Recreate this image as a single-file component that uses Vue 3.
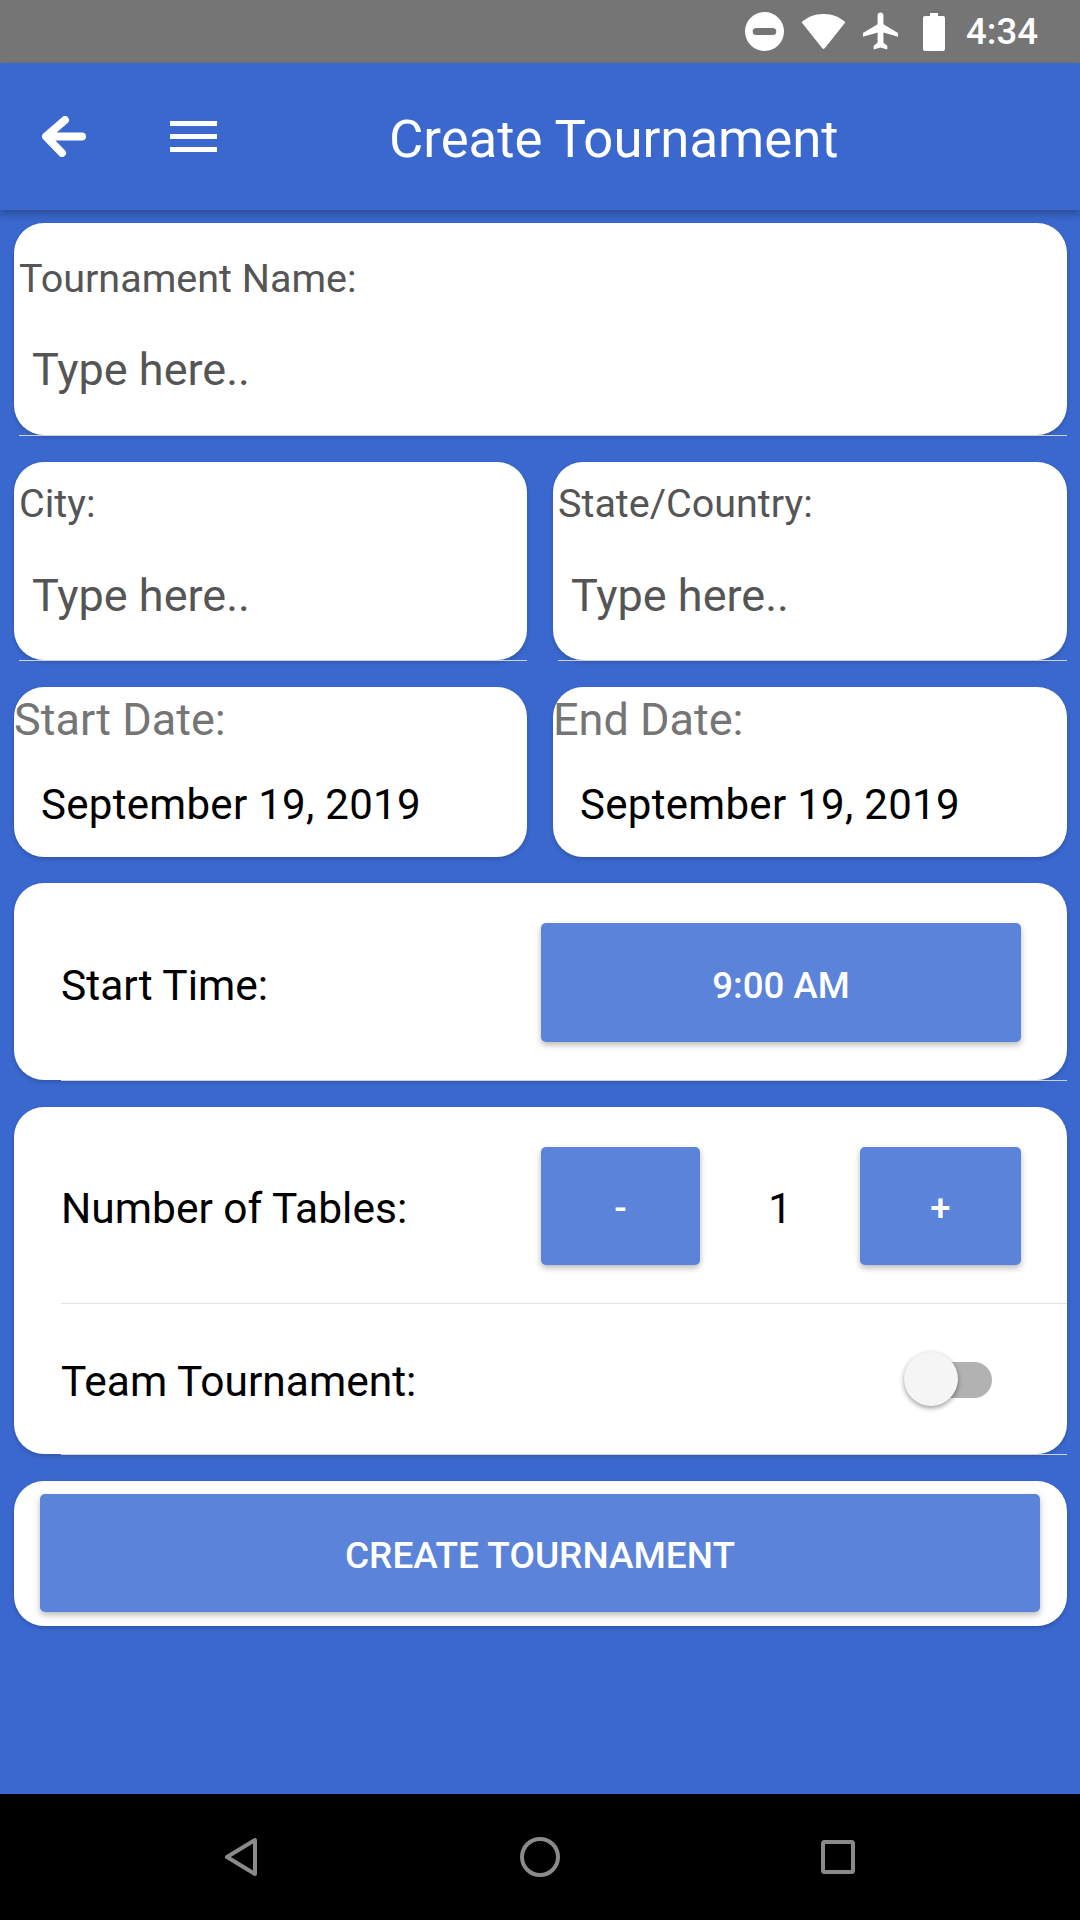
<script setup>
const navColor = '#8a8a8a'
</script>

<template>
  <div class="screen">
    <div class="status-bar">
      <svg class="st-icon dnd" viewBox="0 0 38 38"><path fill="#fff" fill-rule="evenodd" d="M19 0a19 19 0 1 1 0 38a19 19 0 1 1 0-38zM11 15.500a3.500 3.500 0 0 0 0 7h16a3.500 3.500 0 0 0 0-7z"/></svg>
      <svg class="st-icon wifi" viewBox="0 0 46 38"><path fill="#fff" d="M23 1C13.500 1 6 4.500 0.500 9.500L21.500 36a2 2 0 0 0 3 0L45.500 9.500C40 4.500 32.500 1 23 1z"/></svg>
      <svg class="st-icon plane" viewBox="0 0 38 40"><path fill="#fff" d="M37 25v-4L22 12V3c0-2-1.300-3-3-3s-3 1-3 3v9L1 21v4l15-4.500V31l-4 3v4l7-2l7 2v-4l-4-3V20.500z"/></svg>
      <svg class="st-icon battery" viewBox="0 0 22 38"><path fill="#fff" d="M7 0h8v3h5a2 2 0 0 1 2 2v31a2 2 0 0 1-2 2H2a2 2 0 0 1-2-2V5a2 2 0 0 1 2-2h5z"/></svg>
      <span class="clock">4:34</span>
    </div>

    <header class="app-header">
      <svg class="back-icon" viewBox="0 0 44 41"><path d="M23 4L4 20.500l16 16.500M5 20.500h35" fill="none" stroke="#fff" stroke-width="8" stroke-linecap="round" stroke-linejoin="round"/></svg>
      <div class="menu-icon"><i></i><i></i><i></i></div>
      <h1 class="title">Create Tournament</h1>
    </header>

    <main class="form">
      <section class="card name-card line">
        <label class="field-label">Tournament Name:</label>
        <div class="placeholder">Type here..</div>
      </section>

      <div class="two-col">
        <section class="card place-card line">
          <label class="field-label">City:</label>
          <div class="placeholder">Type here..</div>
        </section>
        <section class="card place-card line">
          <label class="field-label">State/Country:</label>
          <div class="placeholder">Type here..</div>
        </section>
      </div>

      <div class="two-col">
        <section class="card date-card">
          <label class="date-label">Start Date:</label>
          <div class="date-value">September 19, 2019</div>
        </section>
        <section class="card date-card">
          <label class="date-label">End Date:</label>
          <div class="date-value">September 19, 2019</div>
        </section>
      </div>

      <section class="card time-card line indent">
        <span class="row-label">Start Time:</span>
        <button class="btn time-btn">9:00 AM</button>
      </section>

      <section class="card options-card line indent">
        <div class="option-row tables-row">
          <span class="row-label">Number of Tables:</span>
          <div class="stepper">
            <button class="btn step-btn">-</button>
            <span class="step-value">1</span>
            <button class="btn step-btn">+</button>
          </div>
        </div>
        <div class="option-row team-row">
          <span class="row-label">Team Tournament:</span>
          <div class="switch"><div class="switch-thumb"></div></div>
        </div>
      </section>

      <section class="card submit-card">
        <button class="btn submit-btn">CREATE TOURNAMENT</button>
      </section>
    </main>

    <nav class="nav-bar">
      <svg class="nav-back" viewBox="0 0 34 40"><path d="M31 3v34L3 20z" fill="none" :stroke="navColor" stroke-width="4" stroke-linejoin="round"/></svg>
      <svg class="nav-home" viewBox="0 0 40 40"><circle cx="20" cy="20" r="18" fill="none" :stroke="navColor" stroke-width="4"/></svg>
      <svg class="nav-recent" viewBox="0 0 34 34"><rect x="2" y="2" width="30" height="30" rx="1.500" fill="none" :stroke="navColor" stroke-width="4"/></svg>
    </nav>
  </div>
</template>

<style>
html, body { margin: 0; background: #3a68ce; }
</style>

<style scoped>
.screen {
  width: 1080px; height: 1920px; display: flex; flex-direction: column; overflow: hidden;
  background: #3a68ce; font-family: Roboto, "Liberation Sans", sans-serif;
}

.status-bar {
  height: 63px; flex: none; background: #757575; display: flex; align-items: center; justify-content: flex-end;
  padding-right: 42px; box-sizing: border-box;
}
.st-icon { display: block; }
.dnd { width: 39px; height: 39px; margin-right: 17px; }
.wifi { width: 45px; height: 37px; margin-right: 16px; }
.plane { width: 37px; height: 40px; margin-right: 24px; }
.battery { width: 22px; height: 38px; margin-right: 21px; }
.clock { color: #fff; font-size: 36.600px; font-weight: 500; line-height: 38px; }

.app-header {
  height: 147px; flex: none; background: #3a68ce; display: flex; align-items: center; position: relative;
  box-shadow: 0 4px 8px rgba(0, 0, 0, 0.28); box-sizing: border-box; padding-left: 42px;
}
.back-icon { width: 44px; height: 41px; margin-right: 84px; }
.menu-icon { width: 47px; display: flex; flex-direction: column; gap: 8px; }
.menu-icon i { display: block; height: 5.300px; background: #fff; }
.title {
  margin: 4px 0 0 172px; color: #fff; font-size: 52.700px; font-weight: 400; line-height: 60px; white-space: nowrap;
}

.form { flex: 1; padding: 13px 13px 0 14px; display: flex; flex-direction: column; gap: 27px; }
.two-col { display: grid; grid-template-columns: 513px 514px; gap: 26px; }

.card { background: #fff; border-radius: 30px; box-sizing: border-box; position: relative; box-shadow: 0 2px 4px rgba(0, 0, 0, 0.18); }
.line::after {
  content: ''; position: absolute; left: 5px; right: 0; bottom: -1px; height: 1px; background: #cfcfd6;
}
.indent::after { left: 47px; }

.name-card { height: 212px; padding: 34px 0 0 5px; }
.name-card .placeholder { margin-top: 44px; }
.place-card { height: 198px; padding: 20px 0 0 5px; }
.field-label { display: block; color: #555; font-size: 39.500px; line-height: 44px; }
.placeholder { color: #555; font-size: 45px; line-height: 50px; margin: 45px 0 0 13px; }

.date-card { height: 170px; }
.date-label { display: block; color: #757575; font-size: 45px; line-height: 50px; padding-top: 8px; }
.date-value { color: #000; font-size: 42px; letter-spacing: 0.300px; line-height: 48px; margin: 36px 0 0 27px; }

.row-label { color: #000; font-size: 42.500px; line-height: 46px; margin-top: 6px; }
.btn {
  border: none; background: #5b83da; color: #fff; border-radius: 5px; font-family: inherit; font-weight: 500;
  font-size: 36.600px; padding: 5px 0 0; box-shadow: 0 3px 6px rgba(0, 0, 0, 0.28);
}

.time-card {
  height: 197px; margin-top: -1px; display: flex; align-items: center; justify-content: space-between; padding: 2px 46px 0 47px;
}
.time-btn { width: 480px; height: 119px; }

.options-card { height: 347px; padding-left: 47px; }
.option-row { display: flex; align-items: center; justify-content: space-between; }
.tables-row { height: 197px; border-bottom: 1px solid #e2e2e2; padding: 2px 46px 0 0; box-sizing: border-box; }
.team-row { height: 149px; padding-right: 75px; }
.team-row .row-label { margin-top: 7px; }
.stepper { display: flex; align-items: center; width: 480px; justify-content: space-between; }
.step-btn { width: 159px; height: 118px; }
.step-btn:last-child { width: 161px; }
.step-value { color: #000; font-size: 42px; padding-top: 5px; }

.switch { width: 66px; height: 36px; margin-top: 3px; border-radius: 18px; background: #b2b2b2; position: relative; }
.switch-thumb {
  position: absolute; left: -22px; top: -10px; width: 54px; height: 54px; border-radius: 50%;
  background: #f5f5f5; box-shadow: 0 2px 5px rgba(0, 0, 0, 0.4);
}

.submit-card { height: 145px; padding: 13px 27px 14px 26px; }
.submit-btn { width: 100%; height: 118px; font-size: 37px; }

.nav-bar { height: 126px; flex: none; background: #000; position: relative; }
.nav-back, .nav-home, .nav-recent { position: absolute; }
.nav-back { left: 224px; top: 43px; width: 34px; height: 40px; }
.nav-home { left: 520px; top: 43px; width: 40px; height: 40px; }
.nav-recent { left: 821px; top: 46px; width: 34px; height: 34px; }
</style>
